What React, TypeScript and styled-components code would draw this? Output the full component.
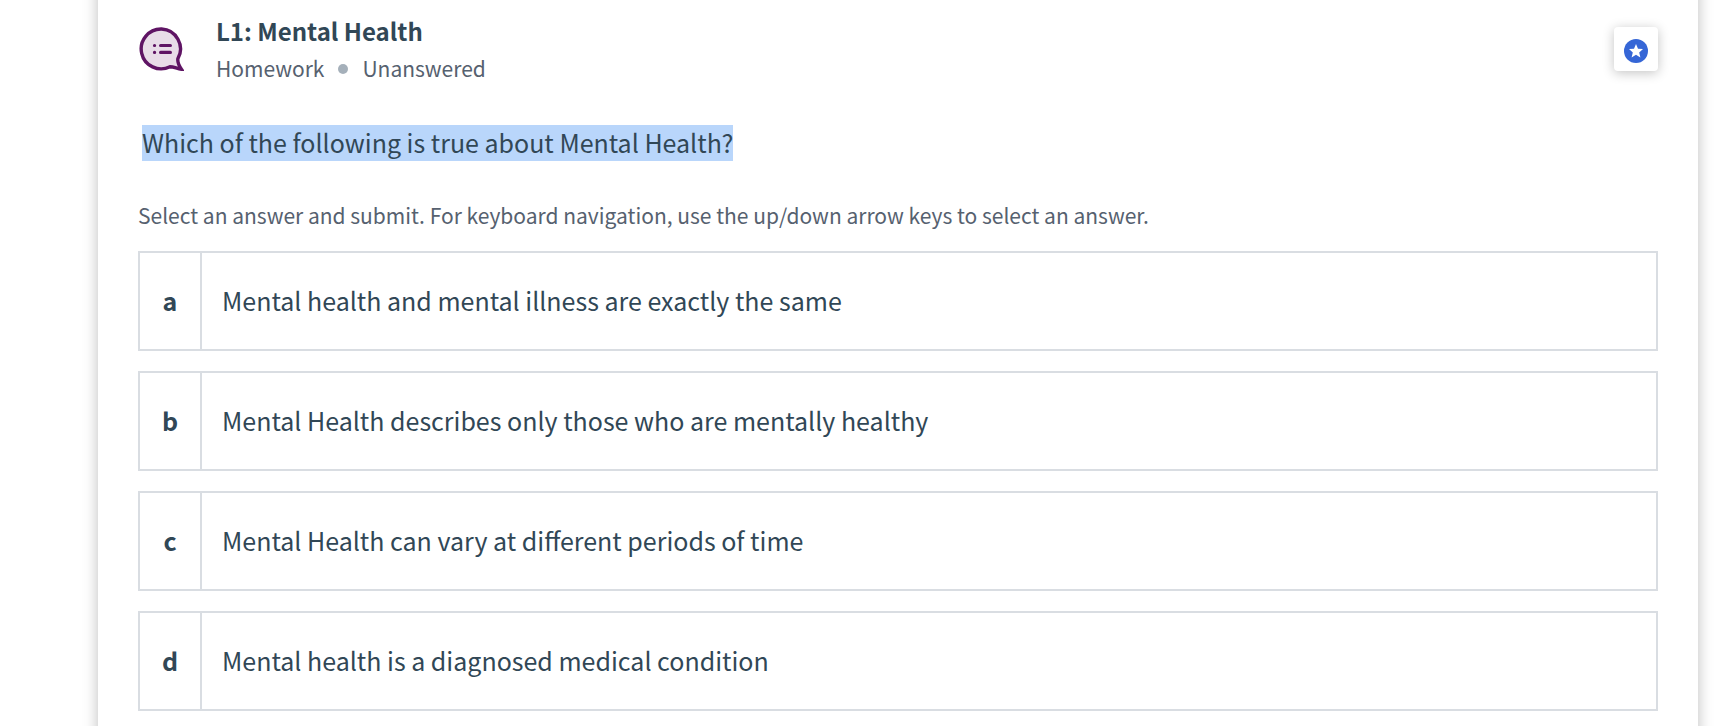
import React, { useState } from "react";
import styled, { createGlobalStyle } from "styled-components";

const GlobalStyle = createGlobalStyle`
  *, *::before, *::after { box-sizing: border-box; }
  body {
    margin: 0;
    background: #fff;
    color: #314756;
    font-family: "Source Sans Pro", "Noto Sans CJK SC", sans-serif;
    font-size: 25px;
    line-height: 36px;
  }
`;

const Page = styled.div`
  display: flex;
  min-height: 100vh;
  padding: 0 26px 0 98px;
  overflow: hidden;
`;

const Card = styled.main`
  flex: 1;
  min-width: 0;
  margin: -20px 0;
  padding: 34px 40px;
  background: #fff;
  box-shadow: 0 0 14px rgba(0, 0, 0, 0.26);
`;

const Header = styled.header`
  display: flex;
  align-items: center;
  height: 70px;
`;

const Heading = styled.div`
  flex: 1;
  padding: 2px 0 0 32px;
`;

const Title = styled.h1`
  margin: 0;
  font-size: 24px;
  line-height: 36px;
  font-weight: 700;
`;

const Meta = styled.p`
  display: flex;
  align-items: center;
  gap: 14px;
  margin: 0;
  color: #56616f;
  font-size: 21px;
  line-height: 38px;
`;

const Dot = styled.span`
  width: 10px;
  height: 10px;
  margin-top: 2px;
  border-radius: 50%;
  background: #a5b0ba;
`;

const StarButton = styled.button`
  display: flex;
  align-items: center;
  justify-content: center;
  width: 44px;
  height: 44px;
  padding: 4px 0 0;
  border: 0;
  border-radius: 4px;
  background: #fff;
  box-shadow: 0 2px 12px rgba(0, 0, 0, 0.24);
  cursor: pointer;
`;

const Question = styled.p`
  display: flex;
  margin: 41px 4px 0;
`;

const Highlight = styled.mark`
  padding-bottom: 2px;
  background: #b9d6fb;
  color: inherit;
  line-height: 34px;
`;

const Answers = styled.fieldset`
  display: grid;
  gap: 20px;
  min-width: 0;
  margin: 36px 0 0;
  padding: 0;
  border: 0;
`;

const Instructions = styled.legend`
  padding: 0 0 18px;
  color: #56616f;
  font-size: 21px;
  line-height: 36px;
`;

const Option = styled.label`
  display: flex;
  min-height: 100px;
  border: 2px solid #d9dde2;
  cursor: pointer;

  &:has(input:checked) { border-color: #3566d6; }
  &:has(input:focus-visible) { outline: 2px solid #3566d6; }
`;

const Radio = styled.input`
  appearance: none;
  width: 0;
  margin: 0;
  outline: none;
`;

const Letter = styled.span`
  display: flex;
  align-items: center;
  justify-content: center;
  width: 62px;
  padding-bottom: 2px;
  border-right: 2px solid #d9dde2;
  font-weight: 700;
`;

const OptionText = styled.span`
  flex: 1;
  align-self: center;
  padding: 0 20px 2px;
`;

const options = [
  { id: "a", text: "Mental health and mental illness are exactly the same" },
  { id: "b", text: "Mental Health describes only those who are mentally healthy" },
  { id: "c", text: "Mental Health can vary at different periods of time" },
  { id: "d", text: "Mental health is a diagnosed medical condition" },
];

const QuestionIcon = () => (
  <svg width="46" height="44" viewBox="0 0 46 44" aria-hidden="true">
    <path
      d="M23.5 2A19.9 19.9 0 1 0 32 39.7C36 39.7 39.3 41.9 43.4 42.2C41 38.6 39.4 34.3 39.9 31.6A19.9 19.9 0 0 0 23.5 2Z"
      fill="#e8dce8"
      stroke="#5f1464"
      strokeWidth="3.4"
      strokeLinejoin="miter"
    />
    <g stroke="#5f1464" strokeWidth="3.2" strokeLinecap="round">
      <path d="M16.5 18.5h.1M22.6 18.5h9.8M16.5 25.4h.1M22.6 25.4h9.8" />
    </g>
  </svg>
);

const StarIcon = () => (
  <svg width="24" height="24" viewBox="0 0 24 24" aria-hidden="true">
    <circle cx="12" cy="12" r="12" fill="#3566d6" />
    <path
      d="M12 5l2 4.7 5 .4-3.8 3.3 1.2 5L12 15.7l-4.4 2.7 1.2-5L5 10.1l5-.4z"
      fill="#fff"
    />
  </svg>
);

export default function App() {
  const [answer, setAnswer] = useState("");
  return (
    <>
      <GlobalStyle />
      <Page>
        <Card>
          <Header>
            <QuestionIcon />
            <Heading>
              <Title>L1: Mental Health</Title>
              <Meta>
                <span>Homework</span>
                <Dot />
                <span>Unanswered</span>
              </Meta>
            </Heading>
            <StarButton type="button" aria-label="Bookmark question">
              <StarIcon />
            </StarButton>
          </Header>
          <Question>
            <Highlight>Which of the following is true about Mental Health?</Highlight>
          </Question>
          <Answers>
            <Instructions>
              Select an answer and submit. For keyboard navigation, use the up/down arrow keys to
              select an answer.
            </Instructions>
            {options.map(({ id, text }) => (
              <Option key={id}>
                <Radio
                  type="radio"
                  name="answer"
                  value={id}
                  checked={answer === id}
                  onChange={() => setAnswer(id)}
                />
                <Letter>{id}</Letter>
                <OptionText>{text}</OptionText>
              </Option>
            ))}
          </Answers>
        </Card>
      </Page>
    </>
  );
}
